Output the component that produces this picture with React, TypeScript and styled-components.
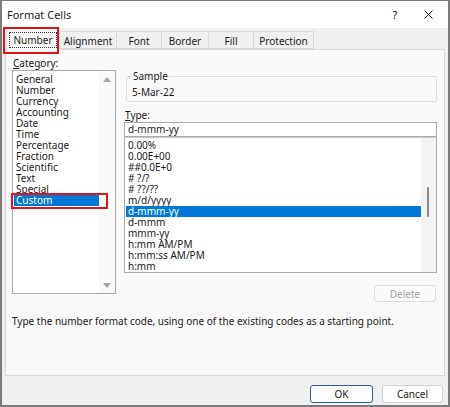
import React from "react";
import styled, { createGlobalStyle } from "styled-components";

const Global = createGlobalStyle`
  html, body { margin: 0; padding: 0; background: #ffffff; }
  * { box-sizing: border-box; }
  body { font-family: "Noto Sans", "Open Sans", sans-serif; font-size: 10px; color: #1b1b1b; }
`;

const Window = styled.div`
  width: 450px;
  height: 407px;
  border-style: solid;
  border-color: #7b7b7b;
  border-width: 1px 2px 2px 2px;
  background: #f0f0f0;
  display: flex;
  flex-direction: column;
  position: relative;
  overflow: hidden;
`;

const TitleBar = styled.div`
  height: 27px;
  background: #ffffff;
  display: flex;
  align-items: center;
  padding: 0 0 0 5px;
  flex-shrink: 0;
`;

const Title = styled.div`
  flex: 1;
  font-size: 11px;
  color: #1a1a1a;
  padding-bottom: 1px;
`;

const TitleButton = styled.div<{ $w: number }>`
  width: ${(p) => p.$w}px;
  height: 27px;
  display: flex;
  align-items: center;
  justify-content: center;
  color: #222;
  font-size: 11px;
`;

const Body = styled.div`
  flex: 1;
  display: flex;
  flex-direction: column;
  padding: 0 3px 0 3px;
`;

const TabStrip = styled.div`
  height: 21px;
  display: flex;
  align-items: flex-end;
  padding-left: 1px;
  position: relative;
  z-index: 2;
`;

const Tab = styled.div<{ $w: number; $active?: boolean }>`
  width: ${(p) => p.$w}px;
  height: ${(p) => (p.$active ? 22 : 18)}px;
  margin-left: -1px;
  margin-bottom: ${(p) => (p.$active ? -1 : 0)}px;
  padding-top: ${(p) => (p.$active ? 1 : 2)}px;
  border: 1px solid #d9d9d9;
  border-bottom: ${(p) => (p.$active ? "none" : "1px solid #d9d9d9")};
  background: ${(p) => (p.$active ? "#f9f9f9" : "#f0f0f0")};
  display: flex;
  align-items: center;
  justify-content: center;
  font-size: 10px;
  color: #1a1a1a;
  position: relative;
  z-index: ${(p) => (p.$active ? 2 : 1)};
  &:first-child { margin-left: 0; }
`;

const FocusText = styled.span`
  border: 1px dotted #333;
  padding: 1px 3px 0;
  line-height: 13px;
`;

const Panel = styled.div`
  height: 327px;
  border: 1px solid #d9d9d9;
  background: #f9f9f9;
  padding: 7px 0 0 6px;
  display: flex;
  flex-direction: column;
  position: relative;
  z-index: 1;
`;

const TopRow = styled.div`
  display: flex;
  gap: 8px;
`;

const LeftCol = styled.div`
  width: 104px;
  display: flex;
  flex-direction: column;
`;

const RightCol = styled.div`
  width: 313px;
  display: flex;
  flex-direction: column;
  margin-top: -1px;
`;

const Label = styled.div<{ $mt?: number }>`
  line-height: 12px;
  margin-top: ${(p) => p.$mt ?? 0}px;
  margin-bottom: 1px;
  padding-left: 1px;
  color: #1a1a1a;
`;

const U = styled.span`
  text-decoration: underline;
  text-underline-offset: 1px;
`;

const CategoryBox = styled.div`
  height: 224px;
  border: 1px solid #ababab;
  background: #ffffff;
  display: flex;
  overflow: hidden;
`;

const ItemList = styled.div<{ $pt?: number }>`
  flex: 1;
  padding: ${(p) => p.$pt ?? 3}px 0 0 1px;
  display: flex;
  flex-direction: column;
  overflow: hidden;
`;

const Item = styled.div<{ $sel?: boolean }>`
  height: 11px;
  flex-shrink: 0;
  line-height: 11px;
  padding-left: 2px;
  white-space: nowrap;
  background: ${(p) => (p.$sel ? "#0078d7" : "transparent")};
  color: ${(p) => (p.$sel ? "#ffffff" : "#1a1a1a")};
`;

const ScrollTrack = styled.div`
  width: 16px;
  background: #f9f9f9;
  display: flex;
  flex-direction: column;
  justify-content: space-between;
  align-items: center;
  padding: 6px 0 5px;
  position: relative;
`;

const Arrow = styled.div<{ $down?: boolean }>`
  width: 0;
  height: 0;
  border-left: 4px solid transparent;
  border-right: 4px solid transparent;
  ${(p) =>
    p.$down ? "border-top: 5px solid #a6a6a6;" : "border-bottom: 5px solid #a6a6a6;"}
`;

const Thumb = styled.div`
  position: absolute;
  left: 6px;
  top: 49px;
  width: 2px;
  height: 30px;
  background: #8a8a8a;
  border-radius: 1px;
`;

const Group = styled.fieldset`
  margin: 14px 0 0 2px;
  padding: 2px 6px 3px 5px;
  border: 1px solid #dedede;
  border-radius: 2px;
  min-width: 0;
`;

const Legend = styled.legend`
  padding: 0 1px;
  margin-left: 0;
  line-height: 12px;
  color: #1a1a1a;
`;

const SampleText = styled.div`
  line-height: 12px;
  padding-top: 2px;
  color: #1a1a1a;
`;

const Input = styled.div`
  height: 15px;
  border: 1px solid #ababab;
  background: #ffffff;
  line-height: 13px;
  padding-left: 3px;
  color: #1a1a1a;
`;

const TypeBox = styled.div`
  height: 136px;
  border: 1px solid #ababab;
  border-top: 1px solid #c9c9c9;
  background: #ffffff;
  display: flex;
  overflow: hidden;
`;

const TypeScroll = styled(ScrollTrack)`
  width: 15px;
  background: #f3f3f3;
  padding: 0;
`;

const ButtonRow = styled.div<{ $pad?: string }>`
  display: flex;
  justify-content: flex-end;
  gap: 9px;
  padding: ${(p) => p.$pad ?? "0"};
`;

const Button = styled.div<{ $w: number; $primary?: boolean; $disabled?: boolean }>`
  width: ${(p) => p.$w}px;
  height: ${(p) => (p.$primary !== undefined ? 18 : 17)}px;
  border: 1px solid ${(p) => (p.$primary ? "#2d6096" : p.$disabled ? "#dcdcdc" : "#d0d0d0")};
  border-radius: 3px;
  background: ${(p) => (p.$disabled ? "#fafafa" : "#fdfdfd")};
  color: ${(p) => (p.$disabled ? "#a3a3a3" : "#1a1a1a")};
  display: flex;
  align-items: center;
  justify-content: center;
  font-size: 10px;
`;

const Description = styled.div`
  margin-top: 13px;
  line-height: 12px;
  color: #1a1a1a;
`;

const Footer = styled.div`
  flex: 1;
  display: flex;
  justify-content: flex-end;
  align-items: flex-start;
  padding: 9px 2px 0 0;
  gap: 9px;
`;

const Annotation = styled.div<{ $x: number; $y: number; $w: number; $h: number }>`
  position: absolute;
  left: ${(p) => p.$x}px;
  top: ${(p) => p.$y}px;
  width: ${(p) => p.$w}px;
  height: ${(p) => p.$h}px;
  border: 2px solid #e0141e;
  z-index: 10;
  pointer-events: none;
`;

const categories = [
  "General",
  "Number",
  "Currency",
  "Accounting",
  "Date",
  "Time",
  "Percentage",
  "Fraction",
  "Scientific",
  "Text",
  "Special",
  "Custom",
];

const formats = [
  "0.00%",
  "0.00E+00",
  "##0.0E+0",
  "# ?/?",
  "# ??/??",
  "m/d/yyyy",
  "d-mmm-yy",
  "d-mmm",
  "mmm-yy",
  "h:mm AM/PM",
  "h:mm:ss AM/PM",
  "h:mm",
];

const CloseIcon = () => (
  <svg width="9" height="9" viewBox="0 0 9 9">
    <path d="M0.5 0.5 L8.5 8.5 M8.5 0.5 L0.5 8.5" stroke="#222" strokeWidth="1" fill="none" />
  </svg>
);

export default function App() {
  return (
    <>
      <Global />
      <Window>
        <TitleBar>
          <Title>Format Cells</Title>
          <TitleButton $w={26}>?</TitleButton>
          <TitleButton $w={40}>
            <CloseIcon />
          </TitleButton>
        </TitleBar>
        <Body>
          <TabStrip>
            <Tab $w={54} $active>
              <FocusText>Number</FocusText>
            </Tab>
            <Tab $w={58}>Alignment</Tab>
            <Tab $w={46}>Font</Tab>
            <Tab $w={48}>Border</Tab>
            <Tab $w={46}>Fill</Tab>
            <Tab $w={61}>Protection</Tab>
          </TabStrip>
          <Panel>
            <TopRow>
              <LeftCol>
                <Label>
                  <U>C</U>ategory:
                </Label>
                <CategoryBox>
                  <ItemList>
                    {categories.map((c) => (
                      <Item key={c} $sel={c === "Custom"}>
                        {c}
                      </Item>
                    ))}
                  </ItemList>
                  <ScrollTrack>
                    <Arrow />
                    <Arrow $down />
                  </ScrollTrack>
                </CategoryBox>
              </LeftCol>
              <RightCol>
                <Group>
                  <Legend>Sample</Legend>
                  <SampleText>5-Mar-22</SampleText>
                </Group>
                <Label $mt={7}>
                  <U>T</U>ype:
                </Label>
                <Input>d-mmm-yy</Input>
                <TypeBox>
                  <ItemList $pt={2}>
                    {formats.map((f) => (
                      <Item key={f} $sel={f === "d-mmm-yy"}>
                        {f}
                      </Item>
                    ))}
                  </ItemList>
                  <TypeScroll>
                    <Thumb />
                  </TypeScroll>
                </TypeBox>
                <ButtonRow $pad="12px 1px 0 0">
                  <Button $w={62} $disabled>
                    Delete
                  </Button>
                </ButtonRow>
              </RightCol>
            </TopRow>
            <Description>
              Type the number format code, using one of the existing codes as a starting point.
            </Description>
          </Panel>
          <Footer>
            <Button $w={63} $primary>
              OK
            </Button>
            <Button $w={61} $primary={false}>
              Cancel
            </Button>
          </Footer>
        </Body>
        <Annotation $x={1} $y={26} $w={56} $h={27} />
        <Annotation $x={9} $y={192} $w={97} $h={16} />
      </Window>
    </>
  );
}
